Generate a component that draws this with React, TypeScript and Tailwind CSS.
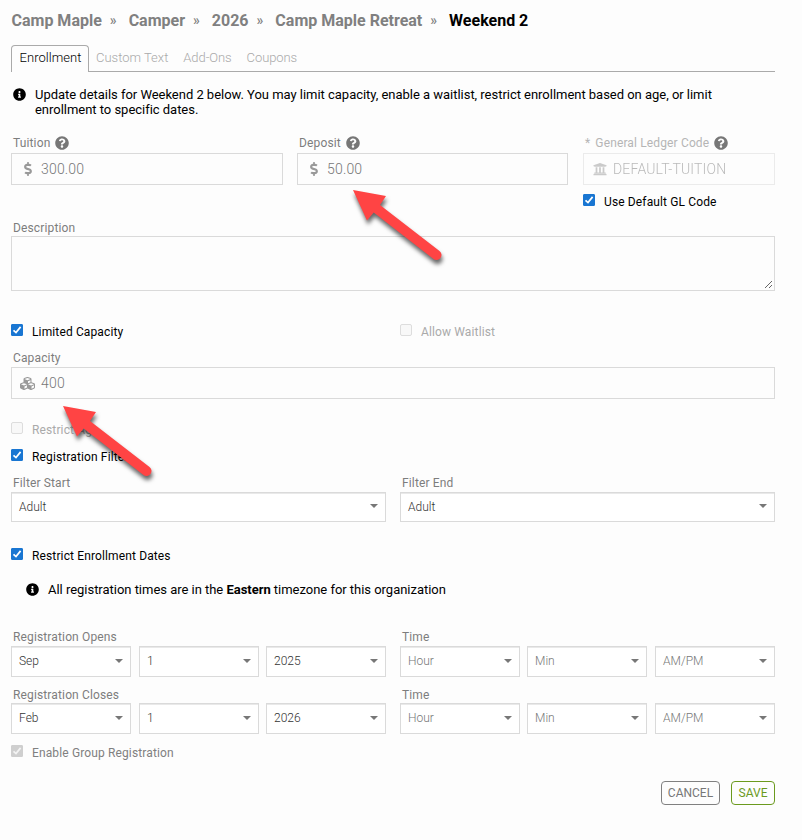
import React from 'react';
import { FaCubes, FaDollarSign, FaInfoCircle, FaQuestionCircle, FaUniversity } from 'react-icons/fa';

const crumbs = ['Camp Maple', 'Camper', '2026', 'Camp Maple Retreat'];

const dateRows = [
  { label: 'Registration Opens', values: ['Sep', '1', '2025'] },
  { label: 'Registration Closes', values: ['Feb', '1', '2026'] },
];

const timeParts = ['Hour', 'Min', 'AM/PM'];

const Label = ({ children }: { children: React.ReactNode }) => (
  <div className="flex h-5 items-center pl-0.5 text-[12px] tracking-[0.14px] text-[#7d7d7d]">{children}</div>
);

const Help = () => <FaQuestionCircle className="ml-[5px] h-3.5 w-3.5 text-[#777]" />;

const Field = ({ icon, value }: { icon: React.ReactNode; value: string }) => (
  <div className="flex h-8 items-center border border-[#dadada] text-[#777]">
    <span className="flex w-[29px] justify-center pl-0.5 text-[#999]">{icon}</span>
    <span className="text-[14px] font-light tracking-[0.18px]">{value}</span>
  </div>
);

const Select = ({ value, muted }: { value: string; muted?: boolean }) => (
  <div className="flex h-full w-full items-center justify-between border border-[#dadada] bg-white pr-[7px] pb-px pl-[7px] shadow-[inset_0_1px_0_#e9e9e9]">
    <span className={`text-[12px] font-light ${muted ? 'text-[#777]' : 'text-[#333]'}`}>{value}</span>
    <svg width="8" height="4" viewBox="0 0 8 4" className="-mt-px">
      <path d="M0 0h8L4 4z" fill="#777" />
    </svg>
  </div>
);

type CheckProps = { label: string; checked?: boolean; disabled?: boolean; dim?: boolean };

const Check = ({ label, checked, disabled, dim }: CheckProps) => {
  let box = 'rounded-[2px] border-[#ddd] bg-[#f8f8f8]';
  if (checked) box = disabled ? 'rounded-[1px] border-[#cfcfcf] bg-[#cfcfcf]' : 'rounded-[1px] border-[#1976d2] bg-[#1976d2]';
  let text = 'text-black';
  if (disabled) text = dim ? 'text-[#aaa]' : 'text-[#808080]';

  return (
    <div className="flex h-4 items-start">
      <span className={`h-3 w-3 shrink-0 border ${box}`}>
        {checked && (
          <svg width="10" height="10" viewBox="0 0 10 10" fill="none">
            <path d="M1.5 5.3 4 7.6 8.6 1.9" stroke={disabled ? '#f3f3f3' : '#fff'} strokeWidth="1.7" />
          </svg>
        )}
      </span>
      <span className={`ml-[9px] text-[12px] leading-4 tracking-[0.13px] ${text}`}>{label}</span>
    </div>
  );
};

// Callout arrow, its tip sits at the top left of the box
const Arrow = ({ className }: { className: string }) => (
  <svg className={`absolute overflow-visible ${className}`} width="90" height="72" viewBox="0 0 90 72">
    <path
      d="M0 0 33 6 27 15 86.5 61A5 5 0 0 1 80.5 69L20.7 22.5 14 30.5Z"
      fill="#ff4444"
      className="drop-shadow-[1px_4px_2px_rgba(0,0,0,0.6)]"
    />
  </svg>
);

const App = () => {
  return (
    <div className="relative h-[840px] w-[802px] bg-[#fdfdfd] pr-[27px] pl-[11px] font-['Roboto',sans-serif]">
      <div className="flex h-[45px] items-center pb-1 pl-[0.5px] text-[16px] font-bold text-[#808080]">
        {crumbs.map((crumb) => (
          <React.Fragment key={crumb}>
            <span>{crumb}</span>
            <span className="mr-3 ml-2 text-[14px] font-medium">»</span>
          </React.Fragment>
        ))}
        <span className="text-black">Weekend 2</span>
      </div>

      <div className="flex h-[27px] border-b border-[#aaa] text-[13px] font-light">
        <div className="-mb-px h-[27px] w-[78px] rounded-t border border-b-0 border-[#aaa] bg-[#fdfdfd] pl-[7.5px] leading-6 tracking-[0.05px] text-black">
          Enrollment
        </div>
        <div className="ml-[7px] leading-[26px] text-[#aaa]">Custom Text</div>
        <div className="ml-[15px] leading-[26px] tracking-[-0.08px] text-[#aaa]">Add-Ons</div>
        <div className="ml-[15px] leading-[26px] tracking-[-0.1px] text-[#aaa]">Coupons</div>
      </div>

      <div className="mt-[15px] flex h-[46px] pl-0.5 text-[13px] leading-[15px] tracking-[-0.026px] text-black">
        <FaInfoCircle className="mt-px h-[13px] w-[13px] shrink-0" />
        <p className="ml-[9px] w-[695px]">
          Update details for Weekend 2 below. You may limit capacity, enable a waitlist, restrict enrollment based on
          age, or limit enrollment to specific dates.
        </p>
      </div>

      <div className="flex h-[85px]">
        <div className="w-[272px]">
          <Label>
            Tuition <Help />
          </Label>
          <Field icon={<FaDollarSign className="h-3.5 w-3.5" />} value="300.00" />
        </div>
        <div className="ml-3.5 w-[271px]">
          <Label>
            Deposit <Help />
          </Label>
          <Field icon={<FaDollarSign className="h-3.5 w-3.5" />} value="50.00" />
        </div>
        <div className="ml-[15px] w-[192px]">
          <Label>
            <span className="mr-[5px] text-[#b5b5b5]">*</span>
            <span className="text-[#b5b5b5]">General Ledger Code</span> <Help />
          </Label>
          <div className="opacity-50">
            <Field icon={<FaUniversity className="h-3.5 w-3.5" />} value="DEFAULT-TUITION" />
          </div>
          <div className="mt-[9px]">
            <Check label="Use Default GL Code" checked />
          </div>
        </div>
      </div>

      <Label>Description</Label>
      <div className="-mt-0.5 flex h-[55px] items-end justify-end border border-[#dadada] p-px">
        <svg width="9" height="9" viewBox="0 0 9 9" stroke="#555" strokeWidth="0.9">
          <path d="M1 8 8 1M5 8 8 5" />
        </svg>
      </div>

      <div className="mt-[33px] flex">
        <div className="w-[389px]">
          <Check label="Limited Capacity" checked />
        </div>
        <Check label="Allow Waitlist" disabled dim />
      </div>
      <div className="mt-2">
        <Label>Capacity</Label>
        <div className="-mt-px">
          <Field icon={<FaCubes className="h-[15px] w-[15px]" />} value="400" />
        </div>
      </div>

      <div className="mt-[23px] space-y-[11px]">
        <Check label="Restrict Age" disabled dim />
        <Check label="Registration Filter" checked />
      </div>

      <div className="mt-2 flex gap-3.5">
        {['Filter Start', 'Filter End'].map((label) => (
          <div key={label} className="w-[375px]">
            <Label>{label}</Label>
            <div className="-mt-px h-[30px]">
              <Select value="Adult" />
            </div>
          </div>
        ))}
      </div>

      <div className="mt-[26px]">
        <Check label="Restrict Enrollment Dates" checked />
      </div>

      <div className="mt-[18px] flex h-[45px] pl-[15px] text-[13px] leading-4 tracking-[-0.026px] text-black">
        <FaInfoCircle className="mt-px h-[13px] w-[13px]" />
        <p className="ml-[9px]">
          All registration times are in the <b>Eastern</b> timezone for this organization
        </p>
      </div>

      <div>
        {dateRows.map((row, n) => (
          <div key={row.label} className={`flex gap-3.5 ${n === 0 ? 'h-[58px]' : 'h-[49px]'}`}>
            {[
              { label: row.label, values: row.values, muted: false },
              { label: 'Time', values: timeParts, muted: true },
            ].map((group) => (
              <div key={group.label} className="w-[375px]">
                <Label>{group.label}</Label>
                <div className={`flex h-[31px] ${n === 0 ? '-mt-px' : '-mt-0.5'}`}>
                  {group.values.map((value, i) => (
                    <div
                      key={i}
                      className={`w-[120px] ${i === 2 ? '' : (i === 0) === group.muted ? 'mr-[7px]' : 'mr-2'}`}
                    >
                      <Select value={value} muted={group.muted} />
                    </div>
                  ))}
                </div>
              </div>
            ))}
          </div>
        ))}
      </div>

      <div className="mt-[11px]">
        <Check label="Enable Group Registration" checked disabled />
      </div>

      <div className="mt-5 flex justify-end gap-[11px] text-[12px]">
        <button className="h-6 w-[59px] rounded border border-[#808080] text-[#777]">CANCEL</button>
        <button className="h-6 w-11 rounded border border-[#6b9a1e] text-[#6b9a1e]">SAVE</button>
      </div>

      <Arrow className="top-[190px] left-[353px]" />
      <Arrow className="top-[406px] left-[63px]" />
    </div>
  );
};

export default App;
